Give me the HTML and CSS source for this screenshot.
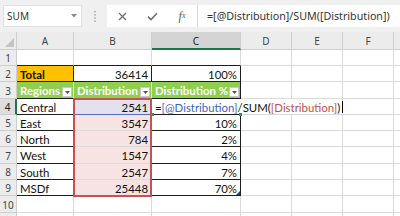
FILE: index.html
```html
<!DOCTYPE html>
<html lang="en">
<head>
<meta charset="utf-8">
<title>Excel formula</title>
<link rel="stylesheet" href="styles.css">
</head>
<body>
<div class="app">
  <div class="fbar">
    <div class="namebox">
      <span class="nb-text">SUM</span>
      <svg class="nb-arrow" width="6" height="4" viewBox="0 0 6 4"><path d="M0 0H6L3 3.5Z" fill="#8a8a8a"/></svg>
    </div>
    <div class="grip">
      <svg width="2" height="11" viewBox="0 0 2 11"><g fill="#b5b5b5"><rect x="0" y="0" width="2" height="1.4"/><rect x="0" y="3.2" width="2" height="1.4"/><rect x="0" y="6.4" width="2" height="1.4"/><rect x="0" y="9.6" width="2" height="1.4"/></g></svg>
    </div>
    <div class="fbtns">
      <span class="slot"><svg width="9" height="9" viewBox="0 0 9 9"><path d="M1 1L8 8M8 1L1 8" stroke="#6e6e6e" stroke-width="1.3" fill="none"/></svg></span>
      <span class="slot"><svg width="11" height="9" viewBox="0 0 11 9"><path d="M1 4.6L4 7.6L10 1.2" stroke="#6e6e6e" stroke-width="1.5" fill="none"/></svg></span>
      <span class="slot fx"><i>f</i><sub>x</sub></span>
    </div>
    <div class="ftext">=[@Distribution]/SUM([Distribution])</div>
  </div>

  <div class="grid">
    <!-- header -->
    <div class="corner"><svg width="9" height="9" viewBox="0 0 9 9"><path d="M9 0V9H0Z" fill="#c4c4c4"/></svg></div>
    <div class="ch">A</div>
    <div class="ch">B</div>
    <div class="ch sel">C</div>
    <div class="ch">D</div>
    <div class="ch">E</div>
    <div class="ch">F</div>
    <div class="ch last"></div>

    <!-- row 1 -->
    <div class="rh">1</div>
    <div class="c bb"></div>
    <div class="c bb"></div>
    <div class="c bb"></div>
    <div class="c"></div>
    <div class="c"></div>
    <div class="c"></div>
    <div class="c"></div>

    <!-- row 2 -->
    <div class="rh">2</div>
    <div class="c bb br total">Total</div>
    <div class="c bb br n">36414</div>
    <div class="c bb br n">100%</div>
    <div class="c"></div>
    <div class="c"></div>
    <div class="c"></div>
    <div class="c"></div>

    <!-- row 3 -->
    <div class="rh">3</div>
    <div class="c hd"><span>Regions</span><span class="dd"><svg width="5" height="3" viewBox="0 0 5 3"><path d="M0 0H5L2.5 3Z" fill="#555"/></svg></span></div>
    <div class="c hd"><span>Distribution</span><span class="dd"><svg width="5" height="3" viewBox="0 0 5 3"><path d="M0 0H5L2.5 3Z" fill="#555"/></svg></span></div>
    <div class="c hd hdl"><span>Distribution %</span><span class="dd"><svg width="5" height="3" viewBox="0 0 5 3"><path d="M0 0H5L2.5 3Z" fill="#555"/></svg></span></div>
    <div class="c"></div>
    <div class="c"></div>
    <div class="c"></div>
    <div class="c"></div>

    <!-- row 4 -->
    <div class="rh rsel">4</div>
    <div class="c bb">Central</div>
    <div class="c n pk cur">2541</div>
    <div class="c bb edit"><span class="fm">=<span class="ref1">[@Distribution]</span>/SUM(<span class="ref2">[Distribution]</span>)<span class="caret"></span></span><span class="hdl-l"></span><span class="hdl-r"></span></div>
    <div class="c nr"></div>
    <div class="c"></div>
    <div class="c"></div>
    <div class="c"></div>

    <!-- row 5 -->
    <div class="rh">5</div>
    <div class="c bb">East</div>
    <div class="c n pk">3547</div>
    <div class="c bb br n">10%</div>
    <div class="c"></div>
    <div class="c"></div>
    <div class="c"></div>
    <div class="c"></div>

    <!-- row 6 -->
    <div class="rh">6</div>
    <div class="c bb">North</div>
    <div class="c n pk">784</div>
    <div class="c bb br n">2%</div>
    <div class="c"></div>
    <div class="c"></div>
    <div class="c"></div>
    <div class="c"></div>

    <!-- row 7 -->
    <div class="rh">7</div>
    <div class="c bb">West</div>
    <div class="c n pk">1547</div>
    <div class="c bb br n">4%</div>
    <div class="c"></div>
    <div class="c"></div>
    <div class="c"></div>
    <div class="c"></div>

    <!-- row 8 -->
    <div class="rh">8</div>
    <div class="c bb">South</div>
    <div class="c n pk">2547</div>
    <div class="c bb br n">7%</div>
    <div class="c"></div>
    <div class="c"></div>
    <div class="c"></div>
    <div class="c"></div>

    <!-- row 9 -->
    <div class="rh">9</div>
    <div class="c bb">MSDf</div>
    <div class="c n pk">25448</div>
    <div class="c bb br n tend">70%<span class="resize"></span></div>
    <div class="c"></div>
    <div class="c"></div>
    <div class="c"></div>
    <div class="c"></div>

    <!-- row 10 -->
    <div class="rh">10</div>
    <div class="c"></div>
    <div class="c"></div>
    <div class="c"></div>
    <div class="c"></div>
    <div class="c"></div>
    <div class="c"></div>
    <div class="c"></div>

    <!-- row 11 (only its top edge is in view) -->
    <div class="rh"></div>
    <div class="c"></div>
    <div class="c"></div>
    <div class="c"></div>
    <div class="c"></div>
    <div class="c"></div>
    <div class="c"></div>
    <div class="c"></div>

    <!-- reference highlight over B4:B9 -->
    <div class="refbox"></div>
  </div>
</div>
</body>
</html>
```

FILE: styles.css
```css
html, body {
  margin: 0;
  padding: 0;
  background: #ffffff;
}

.app {
  width: 400px;
  height: 216px;
  overflow: hidden;
  font-family: "Noto Sans", "Open Sans", sans-serif;
}

/* ---------- formula bar ---------- */
.fbar {
  height: 32px;
  box-sizing: border-box;
  background: #f0f0f0;
  display: flex;
  align-items: flex-start;
  padding-top: 5px;
}

.namebox {
  width: 79px;
  height: 22px;
  margin-left: 3px;
  box-sizing: border-box;
  background: #ffffff;
  border: 1px solid #e2e2e2;
  display: flex;
  align-items: center;
  justify-content: space-between;
  padding: 0 4px 0 3px;
}

.nb-text {
  font-size: 10px;
  color: #333333;
  letter-spacing: 0.1px;
}

.nb-arrow {
  display: block;
}

.grip {
  width: 25px;
  height: 22px;
  display: flex;
  align-items: center;
  justify-content: center;
}

.grip svg {
  display: block;
}

.fbtns {
  width: 91px;
  height: 22px;
  box-sizing: border-box;
  background: #ffffff;
  border-right: 1px solid #d6d6d6;
  display: flex;
}

.slot {
  width: 30px;
  height: 22px;
  display: flex;
  align-items: center;
  justify-content: center;
}

.slot svg {
  display: block;
}

.fx {
  font-family: "Liberation Serif", serif;
  font-size: 12px;
  color: #5a5a5a;
  line-height: 1;
}

.fx sub {
  font-size: 8px;
  font-style: italic;
  vertical-align: -1px;
}

.ftext {
  flex: 1;
  height: 22px;
  background: #ffffff;
  padding-left: 9px;
  font-size: 10.7px;
  color: #333333;
  line-height: 22px;
  white-space: nowrap;
  overflow: hidden;
}

/* ---------- grid ---------- */
.grid {
  position: relative;
  display: grid;
  grid-template-columns: 17px 57px 78px 89px 51px 51px 51px 6px;
  grid-template-rows: 18px 16px 16px 17px 16px 16px 16px 17px 16px 16px 17px 16px;
}

.corner,
.ch,
.rh {
  box-sizing: border-box;
  background: #ececec;
  border-right: 1px solid #cdcdcd;
  border-bottom: 1px solid #cdcdcd;
  color: #444444;
  font-size: 10px;
  display: flex;
  align-items: center;
  justify-content: center;
}

.corner {
  align-items: flex-end;
  justify-content: flex-end;
  padding: 0 2px 2px 0;
}

.corner svg {
  display: block;
}

.ch {
  padding-top: 1px;
}

.ch.sel {
  background: #d4d4d4;
  color: #222222;
  border-bottom: 2px solid #217346;
}

.ch.last {
  border-right: none;
}

.rh {
  padding-top: 1px;
}

.rh.rsel {
  background: #dedede;
  color: #222222;
  border-right: 2px solid #217346;
}

.c {
  box-sizing: border-box;
  border-right: 1px solid #dadada;
  border-bottom: 1px solid #dadada;
  display: flex;
  align-items: center;
  padding: 1px 3px 0 3px;
  font-family: "Lato", "Liberation Sans", sans-serif;
  font-size: 11.4px;
  color: #111111;
  white-space: nowrap;
  overflow: hidden;
  min-width: 0;
}

.c.n {
  justify-content: flex-end;
}

.c.bb {
  border-bottom-color: #1e1e1e;
}

.c.br {
  border-right-color: #1e1e1e;
}

.c.total {
  background: #ffc000;
  font-weight: 700;
}

.c.hd {
  background: #8fce4f;
  color: #ffffff;
  font-weight: 700;
  justify-content: space-between;
  border-right-color: #d8ecc4;
  border-bottom-color: #1e1e1e;
  padding-right: 1px;
}

.c.hdl {
  border-right-color: #1e1e1e;
}

.dd {
  width: 10px;
  height: 10px;
  box-sizing: border-box;
  background: #ffffff;
  border: 1px solid #c8c8c8;
  display: flex;
  align-items: center;
  justify-content: center;
  align-self: flex-end;
  margin-bottom: 1px;
}

.dd svg {
  display: block;
}

.c.pk {
  background: #f8e3e3;
}

.c.cur {
  background: #e3e1ee;
  border-bottom: 1px solid #4f6fc6;
}

.c.edit {
  position: relative;
  z-index: 2;
  overflow: visible;
  border-right: none;
  border-bottom-color: #1e1e1e;
}

.c.nr {
  border-right: none;
}

.fm {
  display: flex;
  align-items: center;
  color: #111111;
}

.ref1 {
  color: #3f63c4;
}

.ref2 {
  color: #c0504d;
}

.caret {
  display: block;
  width: 1px;
  height: 12px;
  background: #000000;
  margin-left: 2px;
}

.hdl-l,
.hdl-r {
  position: absolute;
  bottom: -2px;
  width: 3px;
  height: 3px;
  background: #3f8f5f;
}

.hdl-l {
  left: -1px;
}

.hdl-r {
  right: -1px;
}

.c.tend {
  position: relative;
  overflow: visible;
}

.resize {
  position: absolute;
  right: 0;
  bottom: 0;
  width: 0;
  height: 0;
  border-left: 4px solid transparent;
  border-bottom: 4px solid #2a3a8a;
}

.refbox {
  position: absolute;
  grid-column: 3 / 4;
  grid-row: 5 / 11;
  top: -1px;
  left: -1px;
  right: 0;
  bottom: -1px;
  border: 2px solid #c4524f;
  z-index: 3;
  pointer-events: none;
}
```
